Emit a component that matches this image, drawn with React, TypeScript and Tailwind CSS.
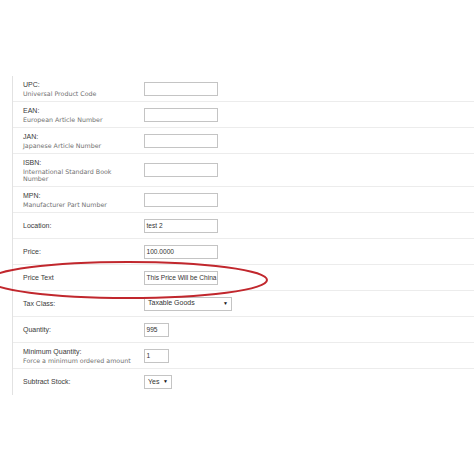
import React from 'react';

type Row = {
  label: string;
  hint?: string;
  h: string;
  field: React.ReactNode;
};

const TextBox = ({ value = '', w = 'w-[74px]' }: { value?: string; w?: string }) => (
  <div
    className={`${w} h-[14px] border border-[#c4c4c4] bg-white px-[1.5px] text-[6.6px] leading-[12px] text-[#333] overflow-hidden whitespace-nowrap`}
  >
    {value}
  </div>
);

const SelectBox = ({ value, w }: { value: string; w: string }) => (
  <div
    className={`${w} h-[14px] border border-[#c4c4c4] bg-white pl-[3px] pr-[3px] flex items-center justify-between text-[7px] text-[#333]`}
  >
    <span>{value}</span>
    <span className="text-[5px] text-[#111]">▼</span>
  </div>
);

export default function App() {
  const rows: Row[] = [
    { label: 'UPC:', hint: 'Universal Product Code', h: 'h-[26px]', field: <TextBox /> },
    { label: 'EAN:', hint: 'European Article Number', h: 'h-[26px]', field: <TextBox /> },
    { label: 'JAN:', hint: 'Japanese Article Number', h: 'h-[26px]', field: <TextBox /> },
    { label: 'ISBN:', hint: 'International Standard Book Number', h: 'h-[33px]', field: <TextBox /> },
    { label: 'MPN:', hint: 'Manufacturer Part Number', h: 'h-[26px]', field: <TextBox /> },
    { label: 'Location:', h: 'h-[26px]', field: <TextBox value="test 2" /> },
    { label: 'Price:', h: 'h-[26px]', field: <TextBox value="100.0000" /> },
    { label: 'Price Text', h: 'h-[26px]', field: <TextBox value="This Price Will be China" /> },
    { label: 'Tax Class:', h: 'h-[26px]', field: <SelectBox value="Taxable Goods" w="w-[88px]" /> },
    { label: 'Quantity:', h: 'h-[26px]', field: <TextBox value="995" w="w-[25px]" /> },
    {
      label: 'Minimum Quantity:',
      hint: 'Force a minimum ordered amount',
      h: 'h-[26px]',
      field: <TextBox value="1" w="w-[25px]" />,
    },
    { label: 'Subtract Stock:', h: 'h-[26px]', field: <SelectBox value="Yes" w="w-[28px]" /> },
  ];

  return (
    <div className="relative w-[474px] h-[474px] bg-white overflow-hidden font-['Liberation_Sans',Arial,sans-serif]">
      <div className="pt-[76px] pl-[12px]">
        <div className="border-l border-[#e2e2e2]">
          {rows.map((row, i) => (
            <div
              key={row.label}
              className={`${row.h} flex items-center ${i < rows.length - 1 ? 'border-b border-[#ececec]' : ''}`}
            >
              <div className="w-[131px] pl-[10px] pr-[11px] leading-none">
                <div className="text-[7px] text-[#3a3a3a] leading-[8px]">{row.label}</div>
                {row.hint && (
                  <div className="text-[6.3px] leading-[7px] text-[#707070] font-['DejaVu_Sans',Verdana,sans-serif] mt-[1px]">
                    {row.hint}
                  </div>
                )}
              </div>
              {row.field}
            </div>
          ))}
        </div>
      </div>

      {/* red highlight ellipse around the Price Text row */}
      <svg className="absolute left-0 top-0" width="474" height="474" viewBox="0 0 474 474">
        <ellipse cx="128" cy="280" rx="139" ry="18" fill="none" stroke="#c1272d" strokeWidth="2" />
      </svg>
    </div>
  );
}
